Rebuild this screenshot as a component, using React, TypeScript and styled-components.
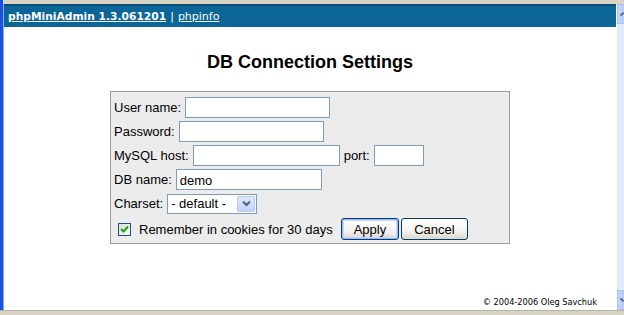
import React from "react";
import styled, { createGlobalStyle } from "styled-components";

const Global = createGlobalStyle`
  html, body { margin: 0; padding: 0; background: #ffffff; }
  body { width: 624px; height: 315px; overflow: hidden; }
`;

const Frame = styled.div`
  width: 624px;
  height: 315px;
  display: flex;
  flex-direction: column;
  background: #ece9d8;
`;

const TopStrip = styled.div`
  height: 4px;
  background: #d8d4c4;
  border-left: 3px solid #1c52d8;
`;

const Middle = styled.div`
  flex: 1;
  display: flex;
  min-height: 0;
`;

const LeftEdge = styled.div`
  width: 3px;
  background: #1c52d8;
  border-right: 1px solid #8aa7ee;
`;

const Content = styled.div`
  flex: 1;
  background: #ffffff;
  display: flex;
  flex-direction: column;
  min-width: 0;
`;

const Header = styled.div`
  height: 21px;
  background: #0c6597;
  border-top: 2px solid #0a4f76;
  display: flex;
  align-items: center;
  padding-left: 4px;
  color: #ffffff;
  font-family: "DejaVu Sans", Verdana, sans-serif;
  font-size: 11px;
  gap: 4px;
`;

const Brand = styled.a`
  color: #ffffff;
  font-weight: bold;
  font-size: 10.7px;
  text-decoration: underline;
`;

const HeadLink = styled.a`
  color: #ffffff;
  text-decoration: underline;
`;

const Title = styled.h1`
  margin: 24px 0 18px;
  text-align: center;
  font-family: "Liberation Sans", Arial, sans-serif;
  font-size: 18px;
  font-weight: bold;
  line-height: 22px;
  color: #000000;
`;

const FormBox = styled.div`
  width: 392px;
  margin: 0 auto;
  background: #ececec;
  border: 1px solid #9c9c9c;
  padding: 5px 3px 3px 3px;
  display: flex;
  flex-direction: column;
  gap: 3px;
  font-family: "Liberation Sans", Arial, sans-serif;
  font-size: 13px;
  color: #000000;
`;

const Row = styled.div`
  display: flex;
  align-items: center;
  height: 21px;
`;

const Label = styled.span<{ $gapLeft?: number }>`
  margin: 0 4px 0 ${(p) => p.$gapLeft ?? 0}px;
  white-space: nowrap;
`;

const TextInput = styled.input<{ $w: number }>`
  box-sizing: border-box;
  width: ${(p) => p.$w}px;
  height: 21px;
  border: 1px solid #7f9db9;
  background: #ffffff;
  padding: 1px 3px 0;
  font-family: "Liberation Sans", Arial, sans-serif;
  font-size: 13px;
  color: #000;
  outline: none;
`;

const SelectBox = styled.div`
  box-sizing: border-box;
  width: 90px;
  height: 20px;
  border: 1px solid #7f9db9;
  background: #ffffff;
  display: flex;
  align-items: stretch;
  padding: 1px;
`;

const SelectValue = styled.span`
  flex: 1;
  display: flex;
  align-items: center;
  padding-left: 2px;
  font-size: 13px;
`;

const SelectButton = styled.span`
  width: 16px;
  border: 1px solid #b8cbf5;
  border-radius: 2px;
  background: linear-gradient(180deg, #dfe8fe 0%, #c2d3fb 100%);
  display: flex;
  align-items: center;
  justify-content: center;
`;

const CheckRow = styled.div`
  display: flex;
  align-items: center;
  height: 22px;
  margin-top: 1px;
`;

const CheckLabel = styled.label`
  display: flex;
  align-items: center;
  gap: 8px;
  margin-left: 4px;
  margin-right: 8px;
`;

const CheckBox = styled.span`
  box-sizing: border-box;
  width: 13px;
  height: 13px;
  border: 1px solid #1c5180;
  background: linear-gradient(135deg, #dcdcd7 0%, #ffffff 100%);
  display: flex;
  align-items: center;
  justify-content: center;
`;

const Button = styled.button<{ $default?: boolean }>`
  box-sizing: border-box;
  height: 22px;
  padding: 0 12px;
  margin-right: 2px;
  border: 1px solid #003c74;
  border-radius: 3px;
  background: linear-gradient(180deg, #ffffff 0%, #f4f3ee 60%, #dcd8c8 100%);
  box-shadow: ${(p) =>
    p.$default ? "inset 0 0 0 1px #9ebcf5, inset 0 0 0 2px #c4d6fb" : "none"};
  font-family: "Liberation Sans", Arial, sans-serif;
  font-size: 13px;
  color: #000;
`;

const Spacer = styled.div`
  flex: 1;
`;

const Footer = styled.div`
  text-align: right;
  padding: 0 19px 3px 0;
  font-family: "DejaVu Sans", Verdana, sans-serif;
  font-size: 8.2px;
  color: #000;
`;

const Scrollbar = styled.div`
  width: 7px;
  background: #e4eafd;
  border-left: 1px solid #ffffff;
  display: flex;
  flex-direction: column;
  justify-content: space-between;
`;

const ScrollBtn = styled.div`
  height: 18px;
  background: linear-gradient(90deg, #c3d4fd 0%, #b6c9f8 100%);
  border: 1px solid #aac0f0;
  border-right: none;
  display: flex;
  align-items: center;
  overflow: hidden;
`;

const BottomStrip = styled.div`
  height: 4px;
  background: #d8d4c4;
  border-top: 1px solid #b8b4a4;
`;

export default function App() {
  return (
    <>
      <Global />
      <Frame>
        <TopStrip />
        <Middle>
          <LeftEdge />
          <Content>
            <Header>
              <Brand href="#">phpMiniAdmin 1.3.061201</Brand>
              <span>|</span>
              <HeadLink href="#">phpinfo</HeadLink>
            </Header>
            <Title>DB Connection Settings</Title>
            <FormBox>
              <Row>
                <Label>User name:</Label>
                <TextInput $w={145} />
              </Row>
              <Row>
                <Label>Password:</Label>
                <TextInput $w={145} type="password" />
              </Row>
              <Row>
                <Label>MySQL host:</Label>
                <TextInput $w={147} />
                <Label $gapLeft={4}>port:</Label>
                <TextInput $w={50} />
              </Row>
              <Row>
                <Label>DB name:</Label>
                <TextInput $w={146} defaultValue="demo" />
              </Row>
              <Row>
                <Label>Charset:</Label>
                <SelectBox>
                  <SelectValue>- default -</SelectValue>
                  <SelectButton>
                    <svg width="9" height="7" viewBox="0 0 9 7">
                      <path d="M1 1.5 L4.5 5 L8 1.5" fill="none" stroke="#4d6185" strokeWidth="2" />
                    </svg>
                  </SelectButton>
                </SelectBox>
              </Row>
              <CheckRow>
                <CheckLabel>
                  <CheckBox>
                    <svg width="9" height="9" viewBox="0 0 9 9">
                      <path d="M1 4 L3.5 6.5 L8 1.5" fill="none" stroke="#21a121" strokeWidth="2" />
                    </svg>
                  </CheckBox>
                  Remember in cookies for 30 days
                </CheckLabel>
                <Button $default>Apply</Button>
                <Button>Cancel</Button>
              </CheckRow>
            </FormBox>
            <Spacer />
            <Footer>© 2004-2006 Oleg Savchuk</Footer>
          </Content>
          <Scrollbar>
            <ScrollBtn>
              <svg width="7" height="8" viewBox="0 0 7 8">
                <path d="M3 6 L6.5 2.5" stroke="#4d6185" strokeWidth="2" />
              </svg>
            </ScrollBtn>
            <ScrollBtn>
              <svg width="7" height="8" viewBox="0 0 7 8">
                <path d="M3 2 L6.5 5.5" stroke="#4d6185" strokeWidth="2" />
              </svg>
            </ScrollBtn>
          </Scrollbar>
        </Middle>
        <BottomStrip />
      </Frame>
    </>
  );
}
